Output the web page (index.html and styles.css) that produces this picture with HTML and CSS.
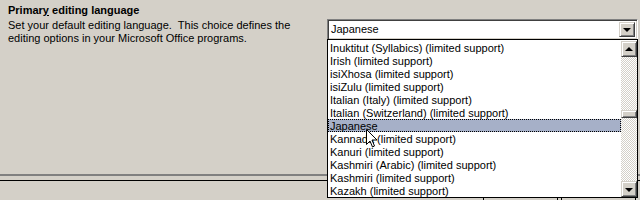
FILE: index.html
```html
<!DOCTYPE html>
<html>
<head>
<meta charset="utf-8">
<link rel="stylesheet" href="styles.css">
</head>
<body>
<div class="page">
  <div class="section">
    <div class="intro">
      <div class="title">Primar<u>y</u> editing language</div>
      <div class="desc">Set your default editing language.&nbsp; This choice defines the<br>editing options in your Microsoft Office programs.</div>
    </div>
    <div class="combo">
      <div class="combo-value">Japanese</div>
      <div class="btn arrow-btn"><span class="tri-down"></span></div>
    </div>
  </div>
  <div class="divider"></div>
  <div class="footer">
    <div class="fbtn"></div>
    <div class="fbtn"></div>
  </div>

  <div class="popup">
    <ul class="items">
      <li>Inuktitut (Syllabics) (limited support)</li>
      <li>Irish (limited support)</li>
      <li>isiXhosa (limited support)</li>
      <li>isiZulu (limited support)</li>
      <li>Italian (Italy) (limited support)</li>
      <li>Italian (Switzerland) (limited support)</li>
      <li class="sel">Japanese</li>
      <li>Kannada (limited support)</li>
      <li>Kanuri (limited support)</li>
      <li>Kashmiri (Arabic) (limited support)</li>
      <li>Kashmiri (limited support)</li>
      <li>Kazakh (limited support)</li>
    </ul>
    <div class="scrollbar">
      <div class="btn sb-btn"><span class="tri-up"></span></div>
      <div class="track track-top"></div>
      <div class="thumb"></div>
      <div class="track track-bottom"></div>
      <div class="btn sb-btn"><span class="tri-down"></span></div>
    </div>
  </div>

  <svg class="cursor" width="12" height="19" viewBox="0 0 12 19">
    <path d="M0.5 0.5 L0.5 15.5 L4 12 L6.5 18 L8.5 17 L6 11 L11 11 Z" fill="#fff" stroke="#000" stroke-width="1"/>
  </svg>
</div>
</body>
</html>
```

FILE: styles.css
```css
* { box-sizing: border-box; }
html, body {
  margin: 0;
  padding: 0;
  background: #d4d0c8;
}
body {
  font-family: "Liberation Sans", Arial, sans-serif;
  font-size: 11px;
  color: #000;
}
.page {
  position: relative;
  width: 640px;
  height: 200px;
  overflow: hidden;
}
.section {
  display: flex;
  align-items: flex-start;
  height: 174px;
  padding: 3px 2px 0 8px;
}
.intro {
  width: 319px;
}
.title {
  font-weight: bold;
  line-height: 14px;
}
.title u { text-decoration: underline; }
.desc {
  margin-top: 2px;
  line-height: 13px;
}
.combo {
  margin-top: 16px;
  width: 311px;
  height: 21px;
  background: #fff;
  border: 1px solid;
  border-color: #808080 #fff #fff #808080;
  box-shadow: inset 1px 1px 0 #404040, inset -1px -1px 0 #d4d0c8;
  display: flex;
  align-items: center;
  padding: 2px 2px 2px 3px;
}
.combo-value {
  flex: 1;
  line-height: 13px;
}
.btn {
  background: #d4d0c8;
  border: 1px solid;
  border-color: #d4d0c8 #404040 #404040 #d4d0c8;
  box-shadow: inset 1px 1px 0 #fff, inset -1px -1px 0 #808080;
  display: flex;
  align-items: center;
  justify-content: center;
}
.arrow-btn {
  width: 16px;
  height: 15px;
}
.tri-down, .tri-up {
  width: 0;
  height: 0;
  border-left: 4px solid transparent;
  border-right: 4px solid transparent;
}
.tri-down { border-top: 4px solid #000; margin-top: 1px; }
.tri-up { border-bottom: 4px solid #000; margin-top: -1px; }
.divider {
  height: 7px;
  border-top: 2px solid #808080;
  border-bottom: 1px solid #000;
  margin-bottom: 16px;
}
.footer {
  display: flex;
  justify-content: flex-end;
  gap: 3px;
  padding-right: 4px;
  height: 3px;
  overflow: hidden;
}
.fbtn {
  width: 75px;
  height: 23px;
  border: 1px solid #000;
}
.popup {
  position: absolute;
  left: 327px;
  top: 39px;
  width: 311px;
  height: 159px;
  background: #fff;
  border: 1px solid #000;
  display: flex;
  padding: 1px 0 0 0;
}
.items {
  list-style: none;
  margin: 0;
  padding: 0;
  flex: 1;
}
.items li {
  height: 13px;
  line-height: 14px;
  padding-left: 2px;
  white-space: nowrap;
}
.items li.sel {
  background: #a6b0c8;
  outline: 1px dotted #000;
  outline-offset: -1px;
}
.scrollbar {
  width: 16px;
  display: flex;
  flex-direction: column;
}
.sb-btn {
  width: 16px;
  height: 16px;
}
.track {
  background: repeating-conic-gradient(#d4d0c8 0 25%, #fff 0 50%) 0 0 / 2px 2px;
}
.track-top { height: 53px; }
.track-bottom { flex: 1; }
.thumb {
  height: 8px;
  background: #d4d0c8;
  border: 1px solid;
  border-color: #d4d0c8 #404040 #404040 #d4d0c8;
  box-shadow: inset 1px 1px 0 #fff, inset -1px -1px 0 #808080;
}
.cursor {
  position: absolute;
  left: 366px;
  top: 129px;
}
```
